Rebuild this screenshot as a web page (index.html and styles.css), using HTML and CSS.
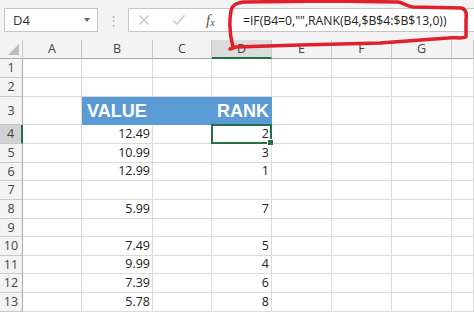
FILE: index.html
```html
<!DOCTYPE html>
<html lang="en">
<head>
  <meta charset="UTF-8" />
  <title>RANK formula</title>
  <link rel="stylesheet" href="styles.css">
</head>
<body>

  <div class="toolbar">
    <div class="namebox">
      <span>D4</span>
      <span class="caret"></span>
    </div>
    <div class="grip">⋮</div>
    <div class="formulabar">
      <svg class="icon" width="12" height="12" viewBox="0 0 12 12"><path d="M1.5 1.5 L10.5 10.5 M10.5 1.5 L1.5 10.5" stroke="#c4c4c4" stroke-width="1.3" fill="none"/></svg>
      <svg class="icon" width="14" height="12" viewBox="0 0 14 12"><path d="M1.5 6.5 L5 10 L12.5 1.5" stroke="#c4c4c4" stroke-width="1.4" fill="none"/></svg>
      <span class="fx">f<sub>x</sub></span>
      <span class="formula">=IF(B4=0,"",RANK(B4,$B$4:$B$13,0))</span>
    </div>
  </div>

  <!-- hand drawn red mark around the formula -->
  <svg class="scribble" width="474" height="60" viewBox="0 0 474 60">
    <path d="M233 47 C230 36 229 22 231 11 C232 5 236 3 244 2 L330 1 L398 2 C404 3 406 6 413 7 L461 8 C466 9 467 13 466 19 L466 37 C461 39 455 37 448 38 L380 43 L300 45 L236 47 L230 49"
          stroke="#e0202a" stroke-width="3.5" fill="none" stroke-linejoin="round" stroke-linecap="round"/>
  </svg>

  <div class="sheet">
    <div class="h corner"></div>
    <div class="h">A</div>
    <div class="h">B</div>
    <div class="h">C</div>
    <div class="h sel-col">D</div>
    <div class="h">E</div>
    <div class="h">F</div>
    <div class="h">G</div>
    <div class="h"></div>

    <div class="r">1</div><div class="c"></div><div class="c"></div><div class="c"></div><div class="c"></div><div class="c"></div><div class="c"></div><div class="c"></div><div class="c"></div>
    <div class="r">2</div><div class="c"></div><div class="c"></div><div class="c"></div><div class="c"></div><div class="c"></div><div class="c"></div><div class="c"></div><div class="c"></div>
    <div class="r">3</div><div class="c"></div><div class="c title">VALUE</div><div class="c title"></div><div class="c title num">RANK</div><div class="c"></div><div class="c"></div><div class="c"></div><div class="c"></div>
    <div class="r sel-row">4</div><div class="c"></div><div class="c num">12.49</div><div class="c"></div><div class="c num active">2</div><div class="c"></div><div class="c"></div><div class="c"></div><div class="c"></div>
    <div class="r">5</div><div class="c"></div><div class="c num">10.99</div><div class="c"></div><div class="c num">3</div><div class="c"></div><div class="c"></div><div class="c"></div><div class="c"></div>
    <div class="r">6</div><div class="c"></div><div class="c num">12.99</div><div class="c"></div><div class="c num">1</div><div class="c"></div><div class="c"></div><div class="c"></div><div class="c"></div>
    <div class="r">7</div><div class="c"></div><div class="c"></div><div class="c"></div><div class="c"></div><div class="c"></div><div class="c"></div><div class="c"></div><div class="c"></div>
    <div class="r">8</div><div class="c"></div><div class="c num">5.99</div><div class="c"></div><div class="c num">7</div><div class="c"></div><div class="c"></div><div class="c"></div><div class="c"></div>
    <div class="r">9</div><div class="c"></div><div class="c"></div><div class="c"></div><div class="c"></div><div class="c"></div><div class="c"></div><div class="c"></div><div class="c"></div>
    <div class="r">10</div><div class="c"></div><div class="c num">7.49</div><div class="c"></div><div class="c num">5</div><div class="c"></div><div class="c"></div><div class="c"></div><div class="c"></div>
    <div class="r">11</div><div class="c"></div><div class="c num">9.99</div><div class="c"></div><div class="c num">4</div><div class="c"></div><div class="c"></div><div class="c"></div><div class="c"></div>
    <div class="r">12</div><div class="c"></div><div class="c num">7.39</div><div class="c"></div><div class="c num">6</div><div class="c"></div><div class="c"></div><div class="c"></div><div class="c"></div>
    <div class="r">13</div><div class="c"></div><div class="c num">5.78</div><div class="c"></div><div class="c num">8</div><div class="c"></div><div class="c"></div><div class="c"></div><div class="c"></div>
  </div>

</body>
</html>
```

FILE: styles.css
```css
body {
  margin: 0;
  width: 474px;
  height: 313px;
  overflow: hidden;
  position: relative;
  background-color: #fff;
  font-family: "Open Sans", Arial, sans-serif;
  color: #222;
}

.toolbar {
  display: flex;
  align-items: center;
  height: 40px;
  padding: 0 0 0 4px;
  box-sizing: border-box;
  background-color: #f3f3f3;
}

.namebox {
  display: flex;
  align-items: center;
  justify-content: space-between;
  width: 94px;
  height: 24px;
  padding: 0 7px 0 8px;
  box-sizing: border-box;
  background-color: #fff;
  border: 1px solid #c6c6c6;
  font-size: 13px;
  color: #333;
}

.caret {
  width: 0;
  height: 0;
  border-left: 3.5px solid transparent;
  border-right: 3.5px solid transparent;
  border-top: 4px solid #666;
}

.grip {
  width: 30px;
  text-align: center;
  font-size: 13px;
  color: #b0b0b0;
}

.formulabar {
  display: flex;
  align-items: center;
  flex: 1;
  min-width: 0;
  height: 24px;
  padding-left: 9px;
  box-sizing: border-box;
  background-color: #fff;
  border: 1px solid #c6c6c6;
  border-right: none;
}

.icon {
  margin-right: 22px;
}

.fx {
  font-family: "Liberation Serif", serif;
  font-style: italic;
  font-size: 15px;
  color: #555;
  margin-left: -2px;
  width: 37px;
}

.fx sub {
  font-size: 10px;
  vertical-align: -1px;
}

.formula {
  font-size: 12.2px;
  color: #222;
  white-space: nowrap;
}

.scribble {
  position: absolute;
  top: 0;
  left: 0;
  pointer-events: none;
}

.sheet {
  display: grid;
  grid-template-columns: 23px 59px 71px 59px 60px 60px 60px 60px 22px;
  grid-template-rows: 19px 19px 19px 28px 19px 19px 18px 19px 19px 18px 19px 18px 19px 19px;
}

.sheet > div {
  box-sizing: border-box;
  border-right: 1px solid #dadada;
  border-bottom: 1px solid #dadada;
  font-size: 12.5px;
  line-height: 16px;
}

.h, .r {
  display: flex;
  align-items: center;
  justify-content: center;
  background-color: #f3f3f3;
  color: #444;
  border-color: #c9c9c9 !important;
}

.h {
  border-bottom-color: #ababab !important;
}

.r {
  border-right-color: #ababab !important;
}

.corner {
  position: relative;
}

.corner::after {
  content: "";
  position: absolute;
  right: 3px;
  bottom: 3px;
  border-left: 11px solid transparent;
  border-bottom: 11px solid #bdbdbd;
}

.sel-col {
  background-color: #dcdcdc;
  border-bottom: 2px solid #217346 !important;
}

.sel-row {
  background-color: #d2d2d2;
  border-right: 2px solid #217346 !important;
}

.c {
  display: flex;
  align-items: flex-end;
  padding: 0 2px 1px 5px;
}

.num {
  justify-content: flex-end;
}

.title {
  background-color: #5b9bd5;
  border-color: #5b9bd5 !important;
  color: #fff;
  font-family: "Liberation Sans", Arial, sans-serif;
  font-weight: bold;
  font-size: 18px !important;
  line-height: 22px !important;
  padding-bottom: 2px;
}

.active {
  position: relative;
}

.active::before {
  content: "";
  position: absolute;
  left: -1px;
  top: -1px;
  right: -1px;
  bottom: -1px;
  border: 2px solid #217346;
}

.active::after {
  content: "";
  position: absolute;
  right: -3px;
  bottom: -3px;
  width: 5px;
  height: 5px;
  background-color: #217346;
  border: 1px solid #fff;
}
```
